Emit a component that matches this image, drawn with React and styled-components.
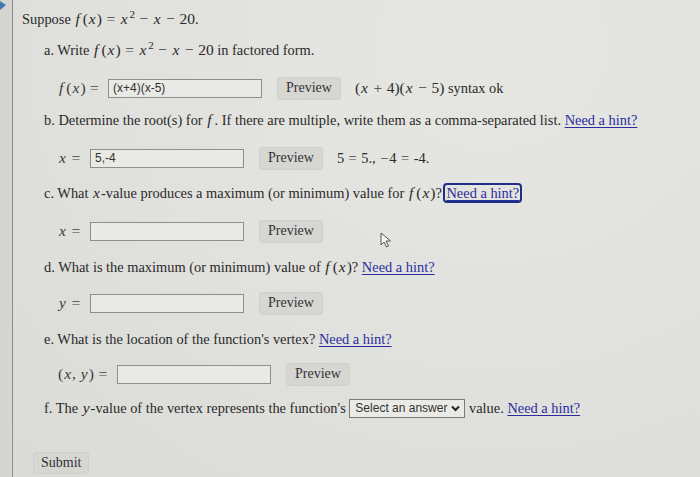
import styled, { createGlobalStyle } from "styled-components";

const GlobalStyle = createGlobalStyle`
  html, body {
    margin: 0;
    padding: 0;
  }
  body {
    background: #e0e0dd;
    font-family: "Liberation Serif", "Times New Roman", serif;
    color: #2a2a2a;
  }
`;

// f(x) in the MathJax style of the page
const F = () => (
  <Math>
    <FVar>f</FVar>(<Var>x</Var>)
  </Math>
);

const Poly = () => (
  <Math>
    <FVar>f</FVar>(<Var>x</Var>)<Op>=</Op>
    <Var>x</Var>
    <sup>2</sup>
    <Op>−</Op>
    <Var>x</Var>
    <Op>−</Op>20
  </Math>
);

const Hint = ({ focused }) => (
  <HintLink href="#" $focused={focused}>
    Need a hint?
  </HintLink>
);

const AnswerRow = ({ label, value, labelWidth, top, after }) => (
  <Row $top={top}>
    <Label $w={labelWidth}>
      <Math>{label}</Math>
    </Label>
    <Input type="text" defaultValue={value} />
    <PreviewButton>Preview</PreviewButton>
    {after && <After>{after}</After>}
  </Row>
);

const App = () => {
  return (
    <Page>
      <GlobalStyle />
      <Strip>
        <svg width="6" height="10" viewBox="0 0 6 10">
          <polygon points="0,0 6,4 0,9" fill="#3f7bb3" />
        </svg>
      </Strip>

      <Content>
        <Intro>
          Suppose <Poly />.
        </Intro>

        <Question $top={11}>
          a. Write <Poly /> in factored form.
        </Question>
        <AnswerRow
          top={16}
          labelWidth={50}
          label={
            <>
              <FVar>f</FVar>(<Var>x</Var>)<Op>=</Op>
            </>
          }
          value="(x+4)(x-5)"
          after={
            <>
              <Math>
                (<Var>x</Var>
                <Op>+</Op>4)(<Var>x</Var>
                <Op>−</Op>5)
              </Math>{" "}
              syntax ok
            </>
          }
        />

        <Question $top={10}>
          b. Determine the root(s) for{" "}
          <Math>
            <FVar>f</FVar>
          </Math>
          . If there are multiple, write them as a comma-separated list.{" "}
          <Hint />
        </Question>
        <AnswerRow
          top={16}
          labelWidth={32}
          label={
            <>
              <Var>x</Var>
              <Op>=</Op>
            </>
          }
          value="5,-4"
          after={
            <>
              5<Op>=</Op>5., <Op $tight>−</Op>4<Op>=</Op>-4.
            </>
          }
        />

        <Question $top={13}>
          c. What{" "}
          <Math>
            <Var>x</Var>
          </Math>
          -value produces a maximum (or minimum) value for <F />?{" "}
          <Hint focused />
        </Question>
        <AnswerRow
          top={16}
          labelWidth={32}
          label={
            <>
              <Var>x</Var>
              <Op>=</Op>
            </>
          }
        />

        <Question $top={14}>
          d. What is the maximum (or minimum) value of <F />? <Hint />
        </Question>
        <AnswerRow
          top={14}
          labelWidth={32}
          label={
            <>
              <Var>y</Var>
              <Op>=</Op>
            </>
          }
        />

        <Question $top={14}>
          e. What is the location of the function's vertex? <Hint />
        </Question>
        <AnswerRow
          top={13}
          labelWidth={59}
          label={
            <>
              (<Var>x</Var>, <Var>y</Var>)<Op>=</Op>
            </>
          }
        />

        <Question $top={12}>
          f. The{" "}
          <Math>
            <Var>y</Var>
          </Math>
          -value of the vertex represents the function's{" "}
          <Select>
            Select an answer
            <svg width="9" height="7" viewBox="0 0 9 7">
              <polyline
                points="1,1.5 4.5,5 8,1.5"
                fill="none"
                stroke="#222"
                strokeWidth="2"
              />
            </svg>
          </Select>{" "}
          value. <Hint />
        </Question>

        <SubmitButton>Submit</SubmitButton>
      </Content>

      <Cursor width="13" height="16" viewBox="0 0 13 16">
        <path
          d="M1 1 L1 13 L4 10 L6.5 15 L8.5 14 L6 9 L10.5 9 Z"
          fill="#f4f4f2"
          stroke="#555"
          strokeWidth="1"
          strokeLinejoin="round"
        />
      </Cursor>
    </Page>
  );
};

export default App;

const Page = styled.div`
  position: relative;
  display: flex;
  width: 700px;
  height: 477px;
  overflow: hidden;
  background: radial-gradient(
    ellipse at 70% 10%,
    #e6e6e3 0%,
    #e1e1de 50%,
    #dadad6 100%
  );
`;

const Strip = styled.div`
  flex: 0 0 12px;
  background: #d5d5d2;
  border-right: 1px solid #8c8c8a;
  padding-top: 1px;
  svg {
    display: block;
  }
`;

const Content = styled.div`
  flex: 1;
  padding: 9px 0 0 9px;
  font-size: 14.4px;
`;

const Intro = styled.div`
  line-height: 20px;
  white-space: nowrap;
`;

const Question = styled(Intro)`
  margin-top: ${(p) => p.$top}px;
  padding-left: 22px;
`;

const Math = styled.span`
  font-size: 15.5px;
  sup {
    font-size: 11px;
    vertical-align: 6px;
    line-height: 0;
    margin-left: 1px;
  }
`;

const Var = styled.i`
  font-style: italic;
  padding: 0 1px;
`;

const FVar = styled(Var)`
  padding: 0 3px 0 1px;
`;

const Op = styled.span`
  display: inline-block;
  margin: 0 ${(p) => (p.$tight ? "1px" : "4.5px")};
  color: #444;
`;

const HintLink = styled.a`
  color: #2b2d9c;
  text-decoration: underline;
  text-underline-offset: 2px;
  ${(p) =>
    p.$focused &&
    `
    outline: 2px solid #1f2f86;
    outline-offset: 0;
    border-radius: 2px;
    padding: 0 1px;
  `}
`;

const Row = styled.div`
  display: flex;
  align-items: center;
  height: 24px;
  margin-top: ${(p) => p.$top}px;
  padding-left: 36px;
  white-space: nowrap;
`;

const Label = styled.span`
  flex: 0 0 ${(p) => p.$w}px;
  color: #3a3a3a;
`;

const Input = styled.input`
  box-sizing: border-box;
  width: 154px;
  height: 19px;
  margin: 0;
  padding: 0 4px;
  border: 1px solid #8e8e8c;
  background: #e9e9e6;
  font-family: "Liberation Sans", Arial, sans-serif;
  font-size: 12px;
  color: #333;
  outline: none;
`;

const PreviewButton = styled.button`
  box-sizing: border-box;
  height: 23px;
  margin-left: 15px;
  padding: 0 8px;
  border: 1px solid #cfcfcc;
  border-radius: 3px;
  background: #d6d6d3;
  font-family: "Liberation Serif", "Times New Roman", serif;
  font-size: 14px;
  color: #333;
`;

const After = styled.span`
  margin-left: 14px;
`;

const Select = styled.span`
  display: inline-flex;
  align-items: center;
  gap: 4px;
  box-sizing: border-box;
  height: 19px;
  padding: 0 4px 0 5px;
  border: 1px solid #7a7a78;
  background: #e9e9e6;
  font-family: "Liberation Sans", Arial, sans-serif;
  font-size: 12px;
  color: #333;
  vertical-align: 1px;
`;

const SubmitButton = styled.button`
  display: block;
  box-sizing: border-box;
  height: 22px;
  margin: 34px 0 0 11px;
  padding: 0 7px;
  border: 1px solid #cfcfcc;
  border-radius: 3px;
  background: #d6d6d3;
  font-family: "Liberation Serif", "Times New Roman", serif;
  font-size: 14px;
  color: #333;
`;

const Cursor = styled.svg`
  position: absolute;
  left: 380px;
  top: 232px;
`;
